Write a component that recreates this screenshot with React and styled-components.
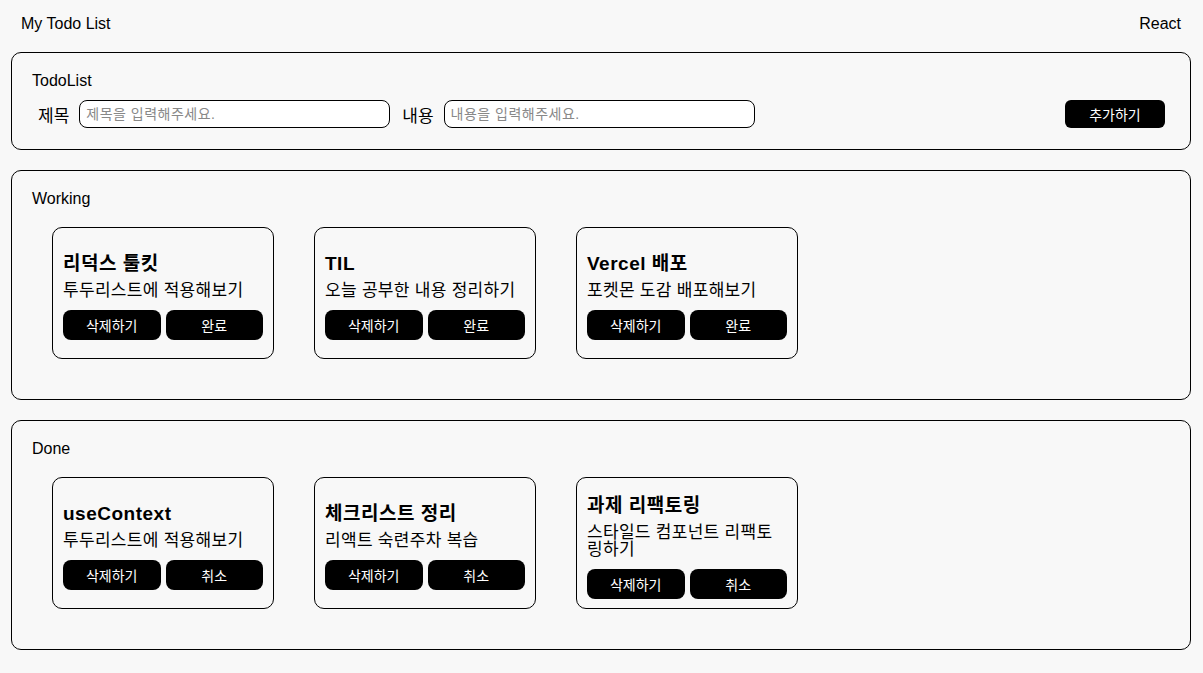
import React from 'react';
import styled, { createGlobalStyle } from 'styled-components';

const GlobalStyle = createGlobalStyle`
  * {
    box-sizing: border-box;
  }

  body {
    margin: 0;
    background: #f8f8f8;
    color: #000;
    font-family: 'Liberation Sans', 'Noto Sans CJK KR', sans-serif;
  }
`;

// --- data ---
const initialTodos = [
  { id: 1, title: '리덕스 툴킷', body: '투두리스트에 적용해보기', isDone: false },
  { id: 2, title: 'TIL', body: '오늘 공부한 내용 정리하기', isDone: false },
  { id: 3, title: 'Vercel 배포', body: '포켓몬 도감 배포해보기', isDone: false },
  { id: 4, title: 'useContext', body: '투두리스트에 적용해보기', isDone: true },
  { id: 5, title: '체크리스트 정리', body: '리액트 숙련주차 복습', isDone: true },
  { id: 6, title: '과제 리팩토링', body: '스타일드 컴포넌트 리팩토링하기', isDone: true },
];

// --- styled components ---
const Layout = styled.div`
  padding: 0 12px 20px 11px;
`;

const Header = styled.header`
  display: flex;
  align-items: center;
  justify-content: space-between;
  height: 47px;
  margin-bottom: 5px;
  padding: 0 10px;
  font-size: 16px;
`;

const Box = styled.section`
  border: 1px solid #000;
  border-radius: 10px;
  padding: ${({ $compact }) => ($compact ? '18px 20px 21px' : '18px 20px 20px')};
  margin-bottom: 20px;
`;

const BoxTitle = styled.div`
  font-size: 16px;
  line-height: 20px;
`;

const Form = styled.form`
  display: flex;
  align-items: center;
  margin-top: 9px;
  padding-left: 6px;
`;

const Label = styled.label`
  font-size: 17px;
  margin-right: 10px;
`;

const Input = styled.input`
  width: 311px;
  height: 28px;
  margin-right: 12px;
  padding: 0 6px;
  border: 1px solid #000;
  border-radius: 8px;
  background: #fff;
  font-family: inherit;
  font-size: 14px;
  letter-spacing: 0.5px;
  outline: none;

  &::placeholder {
    color: #888;
  }
`;

const AddButton = styled.button`
  margin-left: auto;
  margin-right: 5px;
  width: 100px;
  height: 28px;
  border: none;
  border-radius: 6px;
  background: #000;
  color: #fff;
  font-family: inherit;
  font-size: 14px;
  cursor: pointer;
`;

const CardList = styled.div`
  display: flex;
  gap: 40px;
  padding: 18px 20px 20px;
`;

const Card = styled.div`
  display: flex;
  flex-direction: column;
  justify-content: center;
  width: 222px;
  height: 132px;
  padding: 13px 10px 7px;
  border: 1px solid #000;
  border-radius: 10px;
`;

const CardTitle = styled.h3`
  margin: 0 0 6px;
  font-size: 19px;
  line-height: 24px;
  font-weight: 700;
  letter-spacing: 0.5px;
`;

const CardBody = styled.p`
  margin: 0 0 11px;
  font-size: 17px;
  line-height: 17px;
  letter-spacing: 0.3px;
`;

const ButtonRow = styled.div`
  display: flex;
  gap: 5px;
`;

const CardButton = styled.button`
  flex: 1;
  height: 30px;
  border: none;
  border-radius: 8px;
  background: #000;
  color: #fff;
  font-family: inherit;
  font-size: 14px;
  cursor: pointer;
`;

// --- components ---
function TodoCard({ todo, onDelete, onToggle }) {
  return (
    <Card>
      <CardTitle>{todo.title}</CardTitle>
      <CardBody>{todo.body}</CardBody>
      <ButtonRow>
        <CardButton onClick={() => onDelete(todo.id)}>삭제하기</CardButton>
        <CardButton onClick={() => onToggle(todo.id)}>
          {todo.isDone ? '취소' : '완료'}
        </CardButton>
      </ButtonRow>
    </Card>
  );
}

function TodoSection({ title, todos, onDelete, onToggle }) {
  return (
    <Box>
      <BoxTitle>{title}</BoxTitle>
      <CardList>
        {todos.map((todo) => (
          <TodoCard
            key={todo.id}
            todo={todo}
            onDelete={onDelete}
            onToggle={onToggle}
          />
        ))}
      </CardList>
    </Box>
  );
}

export default function App() {
  const [todos, setTodos] = React.useState(initialTodos);
  const [title, setTitle] = React.useState('');
  const [body, setBody] = React.useState('');

  const handleSubmit = (event) => {
    event.preventDefault();
    if (!title.trim()) return;
    setTodos([...todos, { id: Date.now(), title, body, isDone: false }]);
    setTitle('');
    setBody('');
  };

  const handleDelete = (id) => setTodos(todos.filter((todo) => todo.id !== id));
  const handleToggle = (id) =>
    setTodos(
      todos.map((todo) =>
        todo.id === id ? { ...todo, isDone: !todo.isDone } : todo,
      ),
    );

  return (
    <>
      <GlobalStyle />
      <Layout>
        <Header>
          <span>My Todo List</span>
          <span>React</span>
        </Header>

        <Box $compact>
          <BoxTitle>TodoList</BoxTitle>
          <Form onSubmit={handleSubmit}>
            <Label>제목</Label>
            <Input
              value={title}
              placeholder="제목을 입력해주세요."
              onChange={(event) => setTitle(event.target.value)}
            />
            <Label>내용</Label>
            <Input
              value={body}
              placeholder="내용을 입력해주세요."
              onChange={(event) => setBody(event.target.value)}
            />
            <AddButton type="submit">추가하기</AddButton>
          </Form>
        </Box>

        <TodoSection
          title="Working"
          todos={todos.filter((todo) => !todo.isDone)}
          onDelete={handleDelete}
          onToggle={handleToggle}
        />
        <TodoSection
          title="Done"
          todos={todos.filter((todo) => todo.isDone)}
          onDelete={handleDelete}
          onToggle={handleToggle}
        />
      </Layout>
    </>
  );
}
